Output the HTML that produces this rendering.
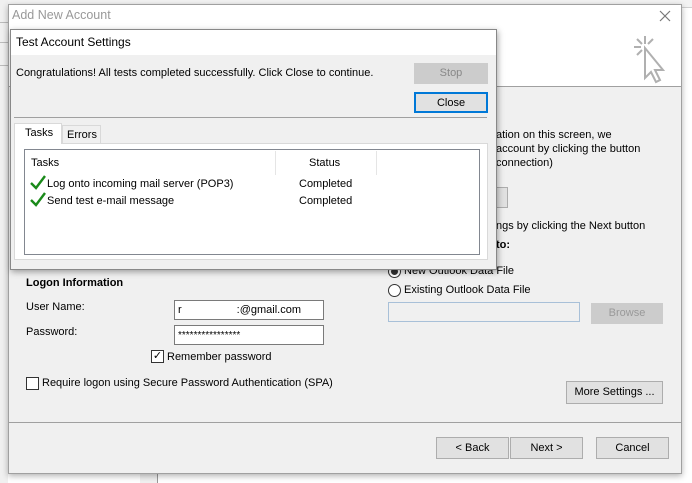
<!DOCTYPE html>
<html><head><meta charset="utf-8"><style>
*{box-sizing:border-box;margin:0;padding:0}
body{width:692px;height:483px;overflow:hidden;background:#fff;font-family:"Liberation Sans",sans-serif;font-size:11px;color:#000;position:relative}
.a{position:absolute;white-space:nowrap}
.btn{position:absolute;background:#e1e1e1;border:1px solid #adadad;text-align:center;font-size:11px}
.in{position:absolute;background:#fff;border:1px solid #7a7a7a}
</style></head><body>
<div class="a" style="left:0;top:0;width:692px;height:8px;background:#f3f3f3;border-bottom:1px solid #d0d0d0"></div>
<div class="a" style="left:0;top:0;width:8px;height:483px;background:#f0f0f0"></div>
<div class="a" style="left:0;top:22px;width:8px;height:1px;background:#bbb"></div>
<div class="a" style="left:0;top:42px;width:8px;height:1px;background:#bbb"></div>
<div class="a" style="left:0;top:65px;width:8px;height:1px;background:#bbb"></div>
<div class="a" style="left:140px;top:473px;width:18px;height:10px;background:#f0f0f0;border-right:1px solid #999"></div>
<div class="a" style="left:8px;top:4px;width:674px;height:470px;background:#f0f0f0;border:1px solid #a0a0a0;box-shadow:0 2px 6px rgba(0,0,0,.3)"></div>
<div class="a" style="left:9px;top:5px;width:672px;height:82px;background:#fff;border-bottom:1px solid #a0a0a0"></div>
<div class="a" style="left:12px;top:8px;font-size:12.5px;color:#999">Add New Account</div>
<svg class="a" style="left:659px;top:10px" width="12" height="12"><path d="M1 1L11 11M11 1L1 11" stroke="#777" stroke-width="1.2"/></svg>
<svg class="a" style="left:630px;top:32px" width="40" height="52" viewBox="0 0 40 52"><g stroke="#b0b0b0" stroke-width="2" fill="none"><line x1="15" y1="4" x2="15" y2="12"/><line x1="4" y1="15" x2="11" y2="15"/><line x1="7" y1="7" x2="12" y2="12"/><line x1="23" y1="7" x2="18" y2="12"/><line x1="7" y1="23" x2="12" y2="18"/><path d="M15 16 L15 46 L21 40 L26 50 L30 48 L25 38 L33 38 Z" fill="#fff"/></g></svg>
<div class="a" style="left:496px;top:128px;line-height:14px">ation on this screen, we<br>account by clicking the button<br>connection)</div>
<div class="btn" style="left:480px;top:187px;width:28px;height:21px;line-height:18px">.</div>
<div class="a" style="left:496px;top:220px">ngs by clicking the Next button</div>
<div class="a" style="left:496px;top:239px;font-weight:bold">to:</div>
<div class="a" style="left:26px;top:277px;font-weight:bold">Logon Information</div>
<div class="a" style="left:26px;top:301px">User Name:</div>
<div class="a" style="left:26px;top:326px">Password:</div>
<div class="in" style="left:174px;top:300px;width:150px;height:20px;padding:3px 0 0 3px">r&nbsp;&nbsp;&nbsp;&nbsp;&nbsp;&nbsp;&nbsp;&nbsp;&nbsp;&nbsp;&nbsp;&nbsp;&nbsp;&nbsp;&nbsp;&nbsp;&nbsp;&nbsp;:@gmail.com</div>
<div class="in" style="left:174px;top:325px;width:150px;height:20px;padding:4px 0 0 3px;font-size:10px">****************</div>
<div class="a" style="left:151px;top:350px;width:13px;height:13px;border:1px solid #333;background:#fff;font-size:11px;line-height:11px;text-align:center">✓</div>
<div class="a" style="left:167px;top:351px">Remember password</div>
<div class="a" style="left:26px;top:377px;width:13px;height:13px;border:1px solid #333;background:#fff"></div>
<div class="a" style="left:42px;top:377px">Require logon using Secure Password Authentication (SPA)</div>
<div class="a" style="left:388px;top:265px;width:13px;height:13px;border:1px solid #333;border-radius:50%;background:#fff"><div style="margin:2px;width:7px;height:7px;border-radius:50%;background:#333"></div></div>
<div class="a" style="left:404px;top:265px">New Outlook Data File</div>
<div class="a" style="left:388px;top:284px;width:13px;height:13px;border:1px solid #333;border-radius:50%;background:#fff"></div>
<div class="a" style="left:404px;top:284px">Existing Outlook Data File</div>
<div class="a" style="left:388px;top:302px;width:192px;height:20px;border:1px solid #a8c0d8;background:#f0f0f0"></div>
<div class="btn" style="left:591px;top:303px;width:72px;height:21px;line-height:19px;color:#999;background:#ccc;border-color:#ccc">Browse</div>
<div class="btn" style="left:566px;top:381px;width:97px;height:23px;line-height:21px">More Settings ...</div>
<div class="a" style="left:9px;top:422px;width:672px;height:1px;background:#a0a0a0"></div>
<div class="btn" style="left:436px;top:437px;width:73px;height:22px;line-height:20px">&lt; Back</div>
<div class="btn" style="left:510px;top:437px;width:73px;height:22px;line-height:20px">Next &gt;</div>
<div class="btn" style="left:596px;top:437px;width:73px;height:22px;line-height:20px">Cancel</div>
<div class="a" style="left:10px;top:29px;width:487px;height:241px;background:#f0f0f0;border:1px solid #888;box-shadow:1px 2px 6px rgba(0,0,0,.35)"></div>
<div class="a" style="left:11px;top:30px;width:485px;height:25px;background:#fff"></div>
<div class="a" style="left:16px;top:35px;font-size:12px">Test Account Settings</div>
<div class="a" style="left:16px;top:67px">Congratulations! All tests completed successfully. Click Close to continue.</div>
<div class="btn" style="left:414px;top:63px;width:74px;height:21px;line-height:19px;color:#888;background:#ccc;border-color:#ccc">Stop</div>
<div class="btn" style="left:414px;top:92px;width:74px;height:21px;line-height:18px;border:2px solid #0078d7">Close</div>
<div class="a" style="left:14px;top:117px;width:473px;height:1px;background:#a0a0a0"></div>
<div class="a" style="left:14px;top:143px;width:474px;height:117px;background:#fff;border:1px solid #d9d9d9"></div>
<div class="a" style="left:14px;top:123px;width:48px;height:21px;background:#fff;border:1px solid #d9d9d9;border-bottom:none"></div>
<div class="a" style="left:25px;top:127px">Tasks</div>
<div class="a" style="left:62px;top:125px;width:39px;height:18px;background:#f0f0f0;border:1px solid #d9d9d9;border-bottom:none"></div>
<div class="a" style="left:67px;top:129px">Errors</div>
<div class="a" style="left:24px;top:149px;width:456px;height:106px;background:#fff;border:1px solid #828790"></div>
<div class="a" style="left:275px;top:151px;width:1px;height:24px;background:#e5e5e5"></div>
<div class="a" style="left:376px;top:151px;width:1px;height:24px;background:#e5e5e5"></div>
<div class="a" style="left:31px;top:157px">Tasks</div>
<div class="a" style="left:309px;top:157px">Status</div>
<svg class="a" style="left:29px;top:174px" width="18" height="16"><path d="M2 9 L7 14 L16 2" stroke="#1a8a1a" stroke-width="2.4" fill="none"/></svg>
<div class="a" style="left:47px;top:178px">Log onto incoming mail server (POP3)</div>
<div class="a" style="left:299px;top:178px">Completed</div>
<svg class="a" style="left:29px;top:191px" width="18" height="16"><path d="M2 9 L7 14 L16 2" stroke="#1a8a1a" stroke-width="2.4" fill="none"/></svg>
<div class="a" style="left:47px;top:195px">Send test e-mail message</div>
<div class="a" style="left:299px;top:195px">Completed</div>
</body></html>
